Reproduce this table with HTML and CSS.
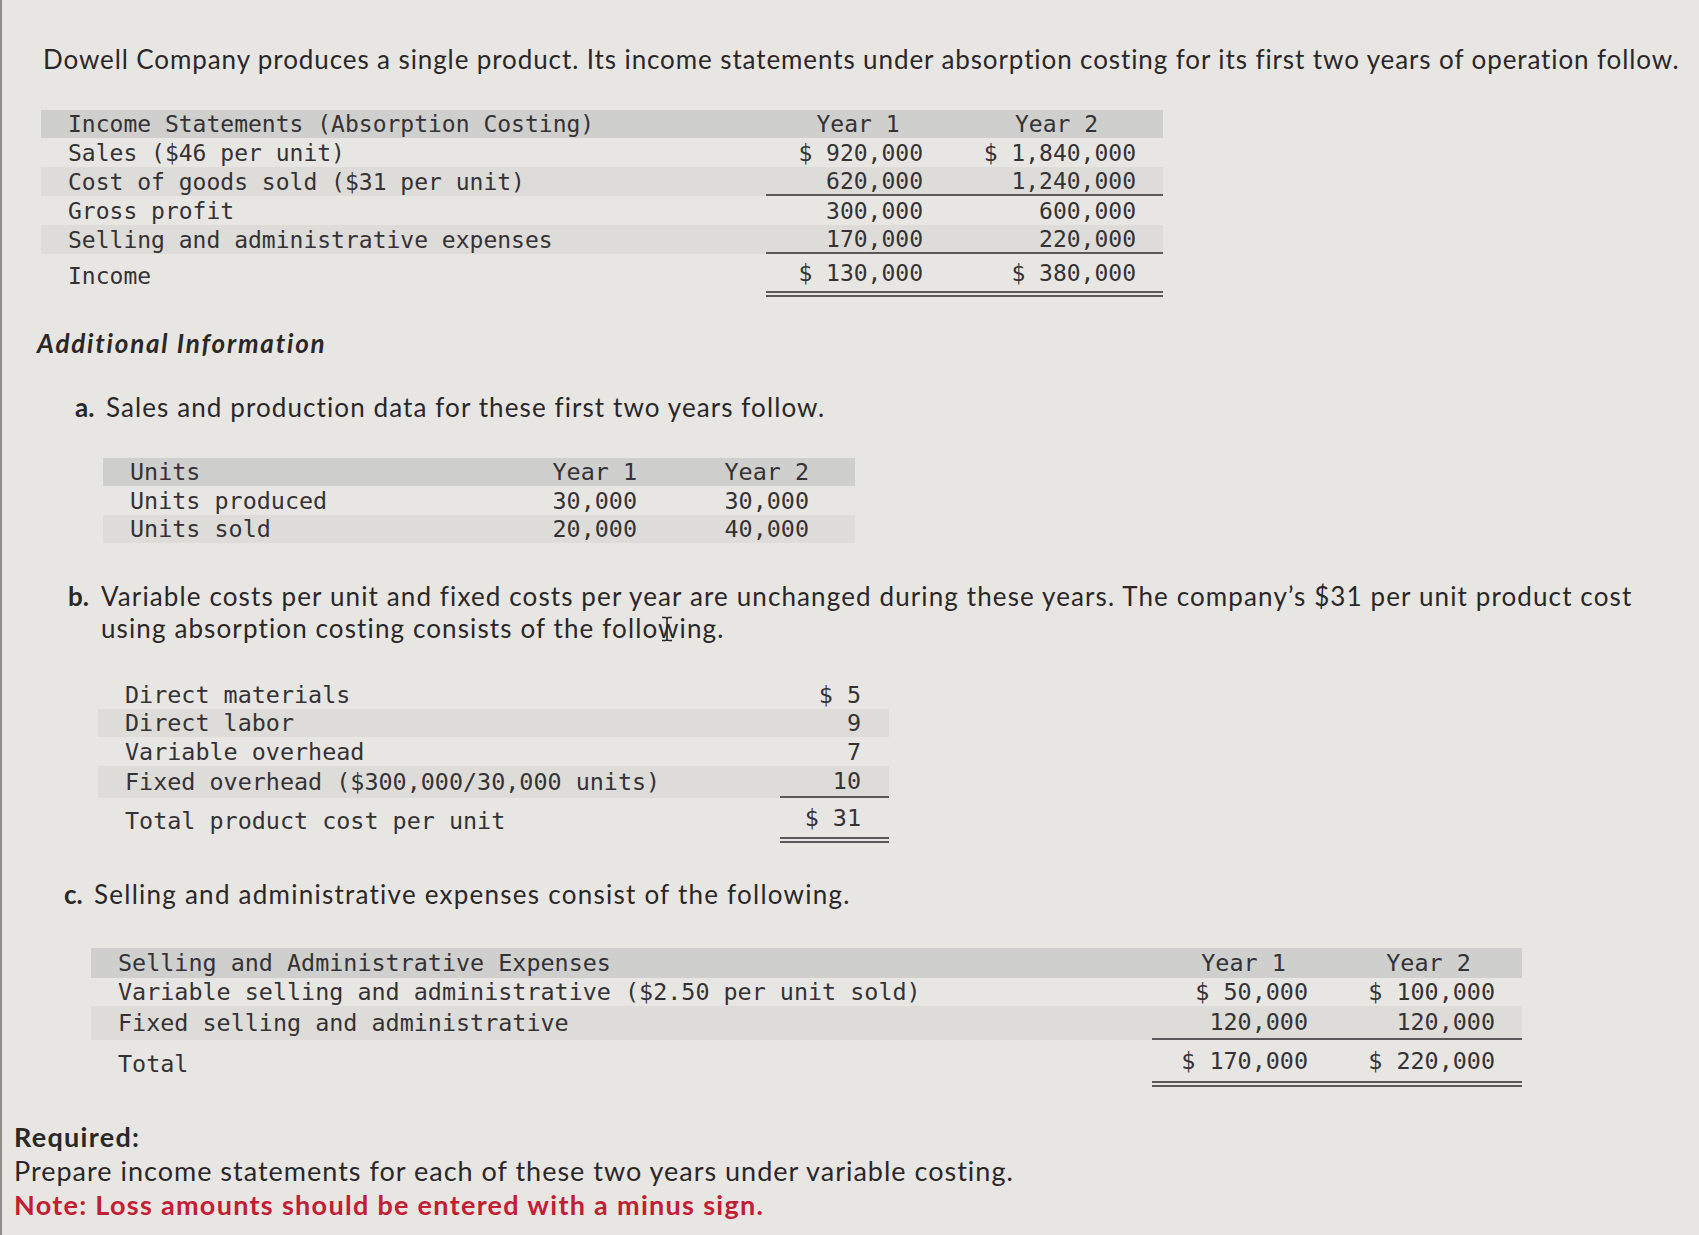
FILE: index.html
```html
<!DOCTYPE html>
<html lang="en">
<head>
<meta charset="utf-8">
<title>Dowell Company</title>
<link rel="stylesheet" href="styles.css">
</head>
<body>
<main class="page">
  <p class="prose intro">Dowell Company produces a single product. Its income statements under absorption costing for its first two years of operation follow.</p>

  <div class="fin t1">
    <div class="row head h28"><span class="lab">Income Statements (Absorption Costing)</span><span class="c">Year 1</span><span class="c">Year 2</span></div>
    <div class="row h29"><span class="lab">Sales ($46 per unit)</span><span class="v">$ 920,000</span><span class="v">$ 1,840,000</span></div>
    <div class="row stripe h29 ul"><span class="lab">Cost of goods sold ($31 per unit)</span><span class="v">620,000</span><span class="v">1,240,000</span></div>
    <div class="row h29"><span class="lab">Gross profit</span><span class="v">300,000</span><span class="v">600,000</span></div>
    <div class="row stripe h29 ul"><span class="lab">Selling and administrative expenses</span><span class="v">170,000</span><span class="v">220,000</span></div>
    <div class="row h43 dbl"><span class="lab">Income</span><span class="v">$ 130,000</span><span class="v">$ 380,000</span></div>
  </div>

  <h3 class="prose addl">Additional Information</h3>

  <p class="prose item item-a"><b class="lbl">a.</b>Sales and production data for these first two years follow.</p>

  <div class="fin units">
    <div class="row head h28"><span class="lab">Units</span><span class="r1">Year 1</span><span class="r2">Year 2</span></div>
    <div class="row h29"><span class="lab">Units produced</span><span class="r1">30,000</span><span class="r2">30,000</span></div>
    <div class="row stripe h28"><span class="lab">Units sold</span><span class="r1">20,000</span><span class="r2">40,000</span></div>
  </div>

  <p class="prose item item-b"><b class="lbl">b.</b>Variable costs per unit and fixed costs per year are unchanged during these years. The company’s $31 per unit product cost using absorption costing consists of the following.</p>

  <div class="fin cost">
    <div class="row h29"><span class="lab">Direct materials</span><span class="v">$ 5</span></div>
    <div class="row stripe h28"><span class="lab">Direct labor</span><span class="v">9</span></div>
    <div class="row h29"><span class="lab">Variable overhead</span><span class="v">7</span></div>
    <div class="row stripe h32 ul"><span class="lab">Fixed overhead ($300,000/30,000 units)</span><span class="v">10</span></div>
    <div class="row h45 dbl"><span class="lab">Total product cost per unit</span><span class="v">$ 31</span></div>
  </div>

  <p class="prose item item-c"><b class="lbl">c.</b>Selling and administrative expenses consist of the following.</p>

  <div class="fin sa">
    <div class="row head h30"><span class="lab">Selling and Administrative Expenses</span><span class="c">Year 1</span><span class="c">Year 2</span></div>
    <div class="row h28"><span class="lab">Variable selling and administrative ($2.50 per unit sold)</span><span class="v">$ 50,000</span><span class="v">$ 100,000</span></div>
    <div class="row stripe h34 ul"><span class="lab">Fixed selling and administrative</span><span class="v">120,000</span><span class="v">120,000</span></div>
    <div class="row h47 dbl"><span class="lab">Total</span><span class="v">$ 170,000</span><span class="v">$ 220,000</span></div>
  </div>

  <section class="required">
    <p class="prose req-title">Required:</p>
    <p class="prose req-text">Prepare income statements for each of these two years under variable costing.</p>
    <p class="prose req-note">Note: Loss amounts should be entered with a minus sign.</p>
  </section>

  <svg class="cursor" width="14" height="26" viewBox="0 0 14 26" aria-hidden="true">
    <path d="M2 1.5 H5.5 Q7 1.5 7 3 Q7 1.5 8.5 1.5 H12 M7 3 V23 M2 24.5 H5.5 Q7 24.5 7 23 Q7 24.5 8.5 24.5 H12" fill="none" stroke="#2a2628" stroke-width="1.6"/>
  </svg>
</main>
</body>
</html>
```
FILE: styles.css
```css
html, body {
  margin: 0;
  padding: 0;
}

body {
  background: #e7e6e2;
  border-left: 2px solid #8e8d8a;
  min-height: 1235px;
  box-sizing: border-box;
  color: #2b2729;
  font-family: Lato, "Open Sans", "Noto Sans", sans-serif;
}

.page {
  position: relative;
  display: flow-root;
}

.prose {
  font-size: 26px;
  line-height: 31px;
  margin: 0;
  font-weight: 400;
}

.intro {
  margin: 44px 0 0 41px;
  letter-spacing: 0.9px;
}

/* financial tables */
.fin {
  font-family: "DejaVu Sans Mono", "Liberation Mono", monospace;
  font-size: 23.4px;
  color: #353236;
}

.row {
  display: grid;
}

.row > span {
  display: flex;
  align-items: center;
  box-sizing: border-box;
  white-space: pre;
}

.head { background: #cfcfce; }
.stripe { background: #dddcd8; }

.h28 { height: 28px; }
.h29 { height: 29px; }
.h30 { height: 30px; }
.h32 { height: 32px; }
.h34 { height: 34px; }
.h43 { height: 43px; }
.h45 { height: 45px; }
.h47 { height: 47px; }

.lab { padding-left: 27px; }
.c { justify-content: center; }
.v { justify-content: flex-end; padding-right: 27px; }

.ul > .v { border-bottom: 2px solid #5c5759; }
.dbl > .v { border-bottom: 6px double #5c5759; }

.t1 {
  margin: 35px 0 0 39px;
  width: 1122px;
  font-size: 23px;
}
.t1 .row { grid-template-columns: 725px 184px 213px; }

.addl {
  margin: 31px 0 0 35px;
  font-weight: 700;
  font-style: italic;
  letter-spacing: 1.8px;
}

.item { position: relative; }
.lbl {
  display: inline-block;
  font-weight: 700;
  letter-spacing: 0;
}

.item-a {
  margin: 33px 0 0 104px;
  letter-spacing: 1.1px;
}
.item-a .lbl { width: 31px; margin-left: -31px; }

.units {
  margin: 35px 0 0 101px;
  width: 752px;
}
.units .row { grid-template-columns: 397px 161px 194px; }
.units .r1 { justify-content: flex-end; padding-right: 24px; }
.units .r2 { justify-content: flex-end; padding-right: 46px; }

.item-b {
  margin: 37px 0 0 99px;
  line-height: 32px;
  padding-right: 40px;
  letter-spacing: 1.12px;
}
.item-b .lbl { width: 33px; margin-left: -33px; }

.cost {
  margin: 36px 0 0 96px;
  width: 791px;
}
.cost .row { grid-template-columns: 682px 109px; }
.cost .v { padding-right: 28px; }

.item-c {
  margin: 36px 0 0 92px;
  letter-spacing: 1.25px;
}
.item-c .lbl { width: 30px; margin-left: -30px; }

.sa {
  margin: 38px 0 0 89px;
  width: 1431px;
}
.sa .row { grid-template-columns: 1061px 183px 187px; }

.required {
  margin: 33px 0 0 12px;
}
.required .prose {
  font-size: 27px;
  line-height: 34px;
}
.req-title { font-weight: 700; letter-spacing: 1.3px; }
.req-text { letter-spacing: 1px; }
.req-note { font-weight: 700; color: #c21d33; letter-spacing: 1.3px; }

.cursor {
  position: absolute;
  left: 658px;
  top: 616px;
}
```
